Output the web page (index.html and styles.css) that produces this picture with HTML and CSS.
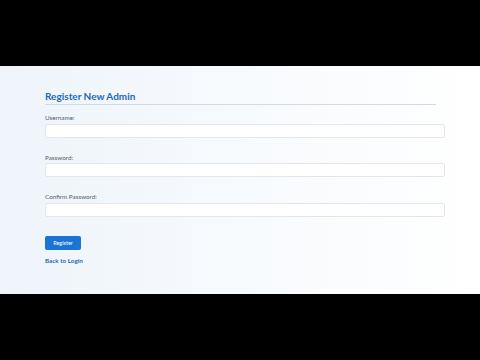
FILE: index.html
```html
<!DOCTYPE html>
<html>
<head>
<meta charset="utf-8">
<link rel="stylesheet" href="styles.css">
</head>
<body>
<main class="page">
  <h2 class="title">Register New Admin</h2>
  <form class="form">
    <div class="group">
      <label class="label">Username:</label>
      <input class="input" type="text">
    </div>
    <div class="group">
      <label class="label">Password:</label>
      <input class="input" type="password">
    </div>
    <div class="group">
      <label class="label">Confirm Password:</label>
      <input class="input" type="password">
    </div>
    <button class="btn" type="button">Register</button>
  </form>
  <a class="back" href="#">Back to Login</a>
</main>
</body>
</html>
```
FILE: styles.css
```css
html, body {
  margin: 0;
  padding: 0;
}
body {
  width: 480px;
  height: 360px;
  background: #000;
  display: flex;
  flex-direction: column;
  justify-content: center;
  font-family: Lato, "Noto Sans", sans-serif;
}
.page {
  height: 228px;
  box-sizing: border-box;
  padding: 24px 0 0 45px;
  background: linear-gradient(to right, #eef4fa 0%, #f7fafd 50%, #ffffff 100%);
}
.title {
  margin: 0;
  width: 391px;
  font-size: 10px;
  line-height: 12px;
  font-weight: 700;
  color: #1d68b6;
  padding-bottom: 2px;
  border-bottom: 1px solid #cfdbe5;
}
.form {
  display: flex;
  flex-direction: column;
  padding-top: 9px;
}
.group {
  display: flex;
  flex-direction: column;
  gap: 1.5px;
  margin-bottom: 16px;
}
.label {
  font-size: 6.3px;
  line-height: 8px;
  color: #555c63;
}
.input {
  width: 400px;
  height: 14px;
  box-sizing: border-box;
  margin: 0;
  padding: 0 4px;
  border: 1px solid #e3e7eb;
  border-radius: 2px;
  background: #fff;
  outline: none;
}
.btn {
  align-self: flex-start;
  margin-top: 3px;
  width: 36px;
  height: 14px;
  padding: 0;
  border: none;
  border-radius: 2px;
  background: #1b74d3;
  color: #fff;
  font-family: inherit;
  font-size: 5.5px;
  line-height: 14px;
}
.back {
  display: block;
  margin-top: 7px;
  font-size: 6.3px;
  line-height: 8px;
  font-weight: 700;
  color: #1d68b6;
  text-decoration: none;
}
```
